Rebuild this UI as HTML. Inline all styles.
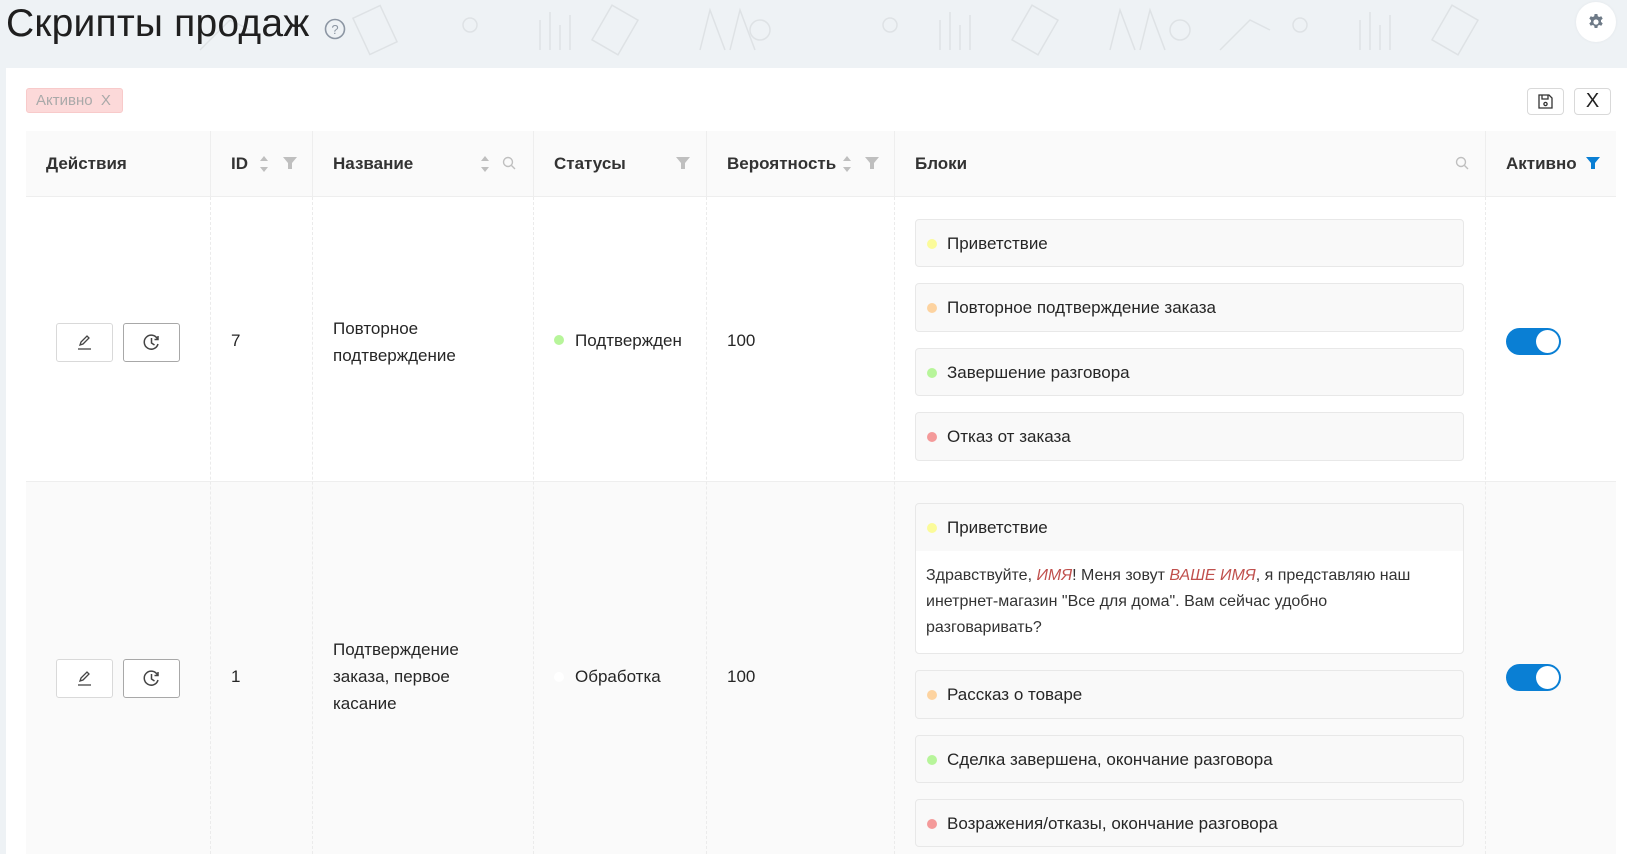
<!DOCTYPE html>
<html><head><meta charset="utf-8">
<style>
*{box-sizing:border-box;margin:0;padding:0}
body{width:1627px;height:854px;overflow:hidden;background:#eef2f5;font-family:"Liberation Sans","DejaVu Sans",sans-serif;color:#262626;position:relative}
.a{position:absolute}
.card{left:6px;top:68px;width:1621px;height:786px;background:#fff}
.title{left:6px;top:2px;font-size:39px;color:#1f1f1f;letter-spacing:0.2px}
.th{position:absolute;top:131px;height:66px;background:#fafafa;border-bottom:1px solid #eee;font-size:17px;font-weight:bold;color:#333;line-height:66px;padding-left:20px}
.vl{position:absolute;width:0;border-left:1px dashed #ebebeb}
.blk{position:absolute;left:915px;width:549px;background:#f9f9f9;border:1px solid #e8e8e8;border-radius:4px;font-size:17px;color:#262626}
.blk .h{height:47px;line-height:47px;padding-left:31px;position:relative}
.dot{position:absolute;left:11px;top:19px;width:10px;height:10px;border-radius:50%}
.txt{font-size:17px;position:absolute;color:#262626}
.btn{position:absolute;width:57px;height:39px;border:1px solid #d9d9d9;border-radius:3px;background:#fff}
.btn2{border-color:#a8a8a8}
.tog{position:absolute;width:55px;height:27px;border-radius:14px;background:#0a7fd4}
.tog::after{content:"";position:absolute;right:2px;top:2px;width:23px;height:23px;border-radius:50%;background:#fff}
</style></head><body>
<svg class="a" style="left:0;top:0" width="1627" height="68" opacity="0.08">
<g stroke="#333" fill="none" stroke-width="1.5">
<rect x="360" y="10" width="30" height="40" transform="rotate(-25 375 30)"/><path d="M540 20v30M550 12v38M560 25v25M570 15v35"/><path d="M700 50l10-40 15 40M730 50l10-40 15 40"/><circle cx="760" cy="30" r="10"/><rect x="600" y="10" width="30" height="40" transform="rotate(30 615 30)"/>
<path d="M940 20v30M950 12v38M960 25v25M970 15v35"/><rect x="1020" y="10" width="30" height="40" transform="rotate(30 1035 30)"/><path d="M1110 50l10-40 15 40M1140 50l10-40 15 40"/><circle cx="1180" cy="30" r="10"/>
<path d="M1360 20v30M1370 12v38M1380 25v25M1390 15v35"/><rect x="1440" y="10" width="30" height="40" transform="rotate(30 1455 30)"/><circle cx="470" cy="25" r="7"/><circle cx="890" cy="25" r="7"/><circle cx="1300" cy="25" r="7"/><path d="M200 50l30-30 20 10"/><path d="M1220 50l30-30 20 10"/>
</g></svg>
<div class="a title">Скрипты продаж</div>
<svg class="a" style="left:324px;top:18px" width="22" height="22"><circle cx="11" cy="11" r="9.5" fill="none" stroke="#8c96a3" stroke-width="1.6"/><text x="11" y="16" font-size="13" text-anchor="middle" fill="#8c96a3" font-family="Liberation Sans">?</text></svg>
<div class="a" style="left:1576px;top:2px;width:40px;height:40px;border-radius:50%;background:#fff;box-shadow:0 0 3px rgba(0,0,0,.05)"></div>
<svg class="a" style="left:1587px;top:13px" width="18" height="18" viewBox="0 0 18 18"><path fill="#6e7a87" d="M7.6 1h2.8l.4 2.2 1.4.8 2.1-.8 1.4 2.4-1.7 1.5v1.8l1.7 1.5-1.4 2.4-2.1-.8-1.4.8-.4 2.2H7.6l-.4-2.2-1.4-.8-2.1.8-1.4-2.4 1.7-1.5V7.1L2.3 5.6l1.4-2.4 2.1.8 1.4-.8z"/><circle cx="9" cy="9" r="2.6" fill="#fff"/></svg>
<div class="a card"></div>
<div class="a" style="left:26px;top:88px;width:97px;height:25px;background:#fcd9d9;border:1px solid #f8caca;border-radius:3px;color:#a9a9a9;font-size:15px;line-height:23px;padding-left:9px">Активно&nbsp;&nbsp;X</div>
<div class="a" style="left:1527px;top:88px;width:37px;height:27px;border:1px solid #d9d9d9;border-radius:4px"></div>
<svg class="a" style="left:1537px;top:93px" width="17" height="17" viewBox="0 0 17 17" fill="none" stroke="#333" stroke-width="1.3"><path d="M2 2h10l3 3v10H2z"/><path d="M5 2v4h6V2"/><circle cx="8.5" cy="11" r="1.6"/></svg>
<div class="a" style="left:1574px;top:88px;width:37px;height:27px;border:1px solid #d9d9d9;border-radius:4px;text-align:center;font-size:20px;line-height:25px;color:#222">X</div>

<div class="th" style="left:26px;width:184px">Действия</div>
<div class="th" style="left:210px;width:102px;border-left:1px solid #eee">ID</div>
<div class="th" style="left:312px;width:221px;border-left:1px solid #eee">Название</div>
<div class="th" style="left:533px;width:173px;border-left:1px solid #eee">Статусы</div>
<div class="th" style="left:706px;width:188px;border-left:1px solid #eee">Вероятность</div>
<div class="th" style="left:894px;width:591px;border-left:1px solid #eee">Блоки</div>
<div class="th" style="left:1485px;width:131px;border-left:1px solid #eee">Активно</div>
<svg class="a" style="left:258px;top:155px" width="12" height="18"><path d="M6 1l4 5H2zM6 17l4-5H2z" fill="#bfbfbf"/></svg>
<svg class="a" style="left:283px;top:157px" width="14" height="13"><path d="M0 0h14L9 6v6H5V6z" fill="#bfbfbf"/></svg>
<svg class="a" style="left:479px;top:155px" width="12" height="18"><path d="M6 1l4 5H2zM6 17l4-5H2z" fill="#bfbfbf"/></svg>
<svg class="a" style="left:502px;top:156px" width="14" height="14" fill="none" stroke="#bfbfbf" stroke-width="1.4"><circle cx="6" cy="6" r="4.5"/><path d="M9.5 9.5l3.5 3.5"/></svg>
<svg class="a" style="left:676px;top:157px" width="14" height="13"><path d="M0 0h14L9 6v6H5V6z" fill="#bfbfbf"/></svg>
<svg class="a" style="left:841px;top:155px" width="12" height="18"><path d="M6 1l4 5H2zM6 17l4-5H2z" fill="#bfbfbf"/></svg>
<svg class="a" style="left:865px;top:157px" width="14" height="13"><path d="M0 0h14L9 6v6H5V6z" fill="#bfbfbf"/></svg>
<svg class="a" style="left:1455px;top:156px" width="14" height="14" fill="none" stroke="#bfbfbf" stroke-width="1.4"><circle cx="6" cy="6" r="4.5"/><path d="M9.5 9.5l3.5 3.5"/></svg>
<svg class="a" style="left:1586px;top:157px" width="14" height="13"><path d="M0 0h14L9 6v6H5V6z" fill="#0a7fd4"/></svg>

<div class="a" style="left:26px;top:481px;width:1590px;height:373px;background:#fafafa;border-top:1px solid #eee"></div>
<div class="vl" style="left:210px;top:197px;height:657px"></div>
<div class="vl" style="left:312px;top:197px;height:657px"></div>
<div class="vl" style="left:533px;top:197px;height:657px"></div>
<div class="vl" style="left:706px;top:197px;height:657px"></div>
<div class="vl" style="left:894px;top:197px;height:657px"></div>
<div class="vl" style="left:1485px;top:197px;height:657px"></div>

<div class="btn" style="left:56px;top:323px"></div>
<div class="btn btn2" style="left:123px;top:323px"></div>
<div class="btn" style="left:56px;top:659px"></div>
<div class="btn btn2" style="left:123px;top:659px"></div>
<svg class="a" style="left:76px;top:333px" width="17" height="18" fill="none" stroke="#444" stroke-width="1.3"><path d="M4 12l1-3 6-6 2 2-6 6z"/><path d="M2 16h13"/></svg>
<svg class="a" style="left:142px;top:333px" width="19" height="19" fill="none" stroke="#444" stroke-width="1.5"><path d="M15.5 6A7 7 0 1 0 16 11"/><path d="M9.5 5v5l3 2"/><path d="M16 3v3.5h-3.5"/></svg>
<svg class="a" style="left:76px;top:669px" width="17" height="18" fill="none" stroke="#444" stroke-width="1.3"><path d="M4 12l1-3 6-6 2 2-6 6z"/><path d="M2 16h13"/></svg>
<svg class="a" style="left:142px;top:669px" width="19" height="19" fill="none" stroke="#444" stroke-width="1.5"><path d="M15.5 6A7 7 0 1 0 16 11"/><path d="M9.5 5v5l3 2"/><path d="M16 3v3.5h-3.5"/></svg>

<div class="txt" style="left:231px;top:331px">7</div>
<div class="txt" style="left:333px;top:315px;line-height:27px">Повторное<br>подтверждение</div>
<div class="a" style="left:554px;top:335px;width:10px;height:10px;border-radius:50%;background:#b7f59a"></div>
<div class="txt" style="left:575px;top:331px">Подтвержден</div>
<div class="txt" style="left:727px;top:331px">100</div>
<div class="tog" style="left:1506px;top:328px"></div>

<div class="blk" style="top:219px;height:48px"><div class="h"><span class="dot" style="background:#fbfb9a"></span>Приветствие</div></div>
<div class="blk" style="top:283px;height:49px"><div class="h"><span class="dot" style="background:#fdd3a0"></span>Повторное подтверждение заказа</div></div>
<div class="blk" style="top:348px;height:48px"><div class="h"><span class="dot" style="background:#b7f59a"></span>Завершение разговора</div></div>
<div class="blk" style="top:412px;height:49px"><div class="h"><span class="dot" style="background:#f49a9a"></span>Отказ от заказа</div></div>

<div class="txt" style="left:231px;top:667px">1</div>
<div class="txt" style="left:333px;top:636px;line-height:27px">Подтверждение<br>заказа, первое<br>касание</div>
<div class="a" style="left:554px;top:672px;width:10px;height:10px;border-radius:50%;background:#fff"></div>
<div class="txt" style="left:575px;top:667px">Обработка</div>
<div class="txt" style="left:727px;top:667px">100</div>
<div class="tog" style="left:1506px;top:664px"></div>

<div class="blk" style="top:503px;height:151px"><div class="h"><span class="dot" style="background:#fbfb9a"></span>Приветствие</div>
<div style="background:#fff;height:102px;padding:12px 38px 0 10px;font-size:16px;line-height:26px;color:#333;border-radius:0 0 4px 4px">Здравствуйте, <i style="color:#c0504d">ИМЯ</i>! Меня зовут <i style="color:#c0504d">ВАШЕ ИМЯ</i>, я представляю наш инетрнет-магазин "Все для дома". Вам сейчас удобно разговаривать?</div></div>
<div class="blk" style="top:670px;height:49px"><div class="h"><span class="dot" style="background:#fdd3a0"></span>Рассказ о товаре</div></div>
<div class="blk" style="top:735px;height:48px"><div class="h"><span class="dot" style="background:#b7f59a"></span>Сделка завершена, окончание разговора</div></div>
<div class="blk" style="top:799px;height:48px"><div class="h"><span class="dot" style="background:#f49a9a"></span>Возражения/отказы, окончание разговора</div></div>
</body></html>
